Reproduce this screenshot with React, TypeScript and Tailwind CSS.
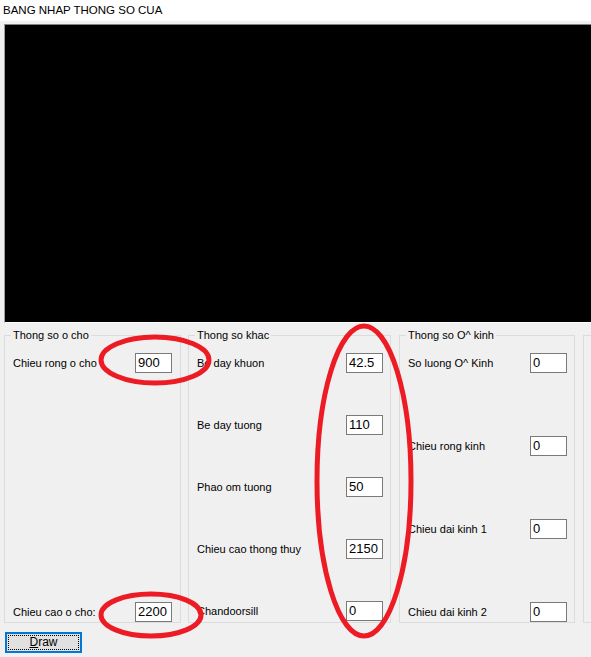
import React from "react";

type FieldProps = { label: string; value: string };

const Field = ({ label, value }: FieldProps) => (
  <div className="flex h-[20px] items-center justify-between">
    <span className="text-[11px] leading-[13px] text-black">{label}</span>
    <div className="h-[20px] w-[37px] border border-[#7a7a7a] bg-white pl-[2px] text-[13px] leading-[18px] text-black">
      {value}
    </div>
  </div>
);

const GroupBox = ({
  title,
  className,
  children,
}: {
  title: string;
  className: string;
  children?: React.ReactNode;
}) => (
  <div className={`relative h-[288px] shrink-0 border border-[#dcdcdc] ${className}`}>
    <span className="absolute -top-[8px] left-[6px] bg-[#f0f0f0] px-[2px] text-[11px] leading-[14px] text-black whitespace-nowrap">
      {title}
    </span>
    {children}
  </div>
);

export default function App() {
  return (
    <div className="relative h-[657px] w-[591px] overflow-hidden bg-[#f0f0f0] font-['Liberation_Sans',Arial,sans-serif]">
      {/* title */}
      <div className="h-[21px] bg-white pl-[3px] pt-[3px] text-[11.5px] leading-[14px] text-black">
        BANG NHAP THONG SO CUA
      </div>

      {/* drawing canvas */}
      <div className="ml-[4px] mt-[3px] h-[299px] w-[600px] border-l border-t border-b border-l-[#a0a0a0] border-t-[#828282] border-b-white bg-black" />

      {/* group boxes */}
      <div className="ml-[4px] mt-[12px] flex">
        <GroupBox title="Thong so o cho" className="w-[177px]">
          <div className="flex h-full flex-col justify-between pl-[8px] pr-[8px] pt-[17px]">
            <Field label="Chieu rong o cho" value="900" />
            <Field label="Chieu cao o cho:" value="2200" />
          </div>
        </GroupBox>

        <GroupBox title="Thong so khac" className="ml-[7px] w-[203px]">
          <div className="flex flex-col gap-[42px] pl-[8px] pr-[7px] pt-[17px]">
            <Field label="Be day khuon" value="42.5" />
            <Field label="Be day tuong" value="110" />
            <Field label="Phao om tuong" value="50" />
            <Field label="Chieu cao thong thuy" value="2150" />
            <Field label="Chandoorsill" value="0" />
          </div>
        </GroupBox>

        <GroupBox title="Thong so O^ kinh" className="ml-[8px] w-[176px]">
          <div className="flex flex-col gap-[63px] pl-[8px] pr-[7px] pt-[17px]">
            <Field label="So luong O^ Kinh" value="0" />
            <Field label="Chieu rong kinh" value="0" />
            <Field label="Chieu dai kinh 1" value="0" />
            <Field label="Chieu dai kinh 2" value="0" />
          </div>
        </GroupBox>

        <GroupBox title="" className="ml-[8px] w-[40px]" />
      </div>

      {/* Draw button */}
      <button className="ml-[5px] mt-[9px] flex h-[21px] w-[77px] items-center justify-center border-2 border-[#0078d7] bg-[#e1e1e1] p-[1px]">
        <span className="flex h-full w-full items-center justify-center border border-dotted border-black text-[12px] leading-[13px] text-black">
          <span className="underline">D</span>raw
        </span>
      </button>

      {/* red annotations */}
      <svg
        className="pointer-events-none absolute left-0 top-0"
        width="591"
        height="657"
        viewBox="0 0 591 657"
      >
        <ellipse cx="155" cy="360" rx="54" ry="23" fill="none" stroke="#ed1c24" strokeWidth="5" />
        <ellipse cx="151" cy="615" rx="50" ry="21" fill="none" stroke="#ed1c24" strokeWidth="5" />
        <ellipse cx="364" cy="481" rx="47" ry="155" fill="none" stroke="#ed1c24" strokeWidth="5" />
      </svg>
    </div>
  );
}
